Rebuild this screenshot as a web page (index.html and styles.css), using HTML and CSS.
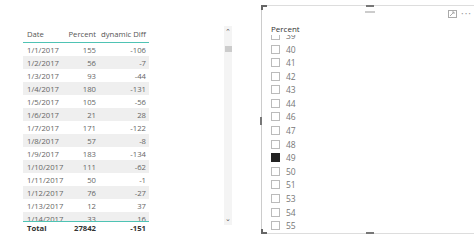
FILE: index.html
```html
<!DOCTYPE html>
<html lang="en">

<head>
 <meta charset="UTF-8">
 <meta name="viewport" content="width=device-width">
 <title>Report</title>
 <link rel="stylesheet" href="styles.css">
</head>

<body>

 <!-- Table visual -->
 <section class="tabla">
  <div class="grid">
   <div class="fila cabecera">
    <span>Date</span><span class="num">Percent</span><span class="num">dynamic Diff</span>
   </div>
   <div class="cuerpo">
    <div class="fila"><span>1/1/2017</span><span class="num">155</span><span class="num">-106</span></div>
    <div class="fila"><span>1/2/2017</span><span class="num">56</span><span class="num">-7</span></div>
    <div class="fila"><span>1/3/2017</span><span class="num">93</span><span class="num">-44</span></div>
    <div class="fila"><span>1/4/2017</span><span class="num">180</span><span class="num">-131</span></div>
    <div class="fila"><span>1/5/2017</span><span class="num">105</span><span class="num">-56</span></div>
    <div class="fila"><span>1/6/2017</span><span class="num">21</span><span class="num">28</span></div>
    <div class="fila"><span>1/7/2017</span><span class="num">171</span><span class="num">-122</span></div>
    <div class="fila"><span>1/8/2017</span><span class="num">57</span><span class="num">-8</span></div>
    <div class="fila"><span>1/9/2017</span><span class="num">183</span><span class="num">-134</span></div>
    <div class="fila"><span>1/10/2017</span><span class="num">111</span><span class="num">-62</span></div>
    <div class="fila"><span>1/11/2017</span><span class="num">50</span><span class="num">-1</span></div>
    <div class="fila"><span>1/12/2017</span><span class="num">76</span><span class="num">-27</span></div>
    <div class="fila"><span>1/13/2017</span><span class="num">12</span><span class="num">37</span></div>
    <div class="fila"><span>1/14/2017</span><span class="num">33</span><span class="num">16</span></div>
   </div>
   <div class="fila total">
    <span>Total</span><span class="num">27842</span><span class="num">-151</span>
   </div>
  </div>

  <div class="scroll">
   <span class="flecha">&#8963;</span>
   <span class="pulgar"></span>
   <span class="hueco"></span>
   <span class="flecha">&#8964;</span>
  </div>
 </section>

 <!-- Slicer visual -->
 <section class="slicer">
  <span class="esquina arriba"></span>
  <span class="esquina abajo"></span>
  <span class="asa asa-top"></span>
  <span class="asa asa-left"></span>
  <span class="asa asa-bottom"></span>

  <div class="barra">
   <span class="grip"></span>
   <svg class="foco" width="9" height="8" viewBox="0 0 9 8">
    <rect x="0.5" y="0.5" width="8" height="7" fill="none" stroke="#aaa"/>
    <path d="M2 6 L6 2 M4 2 H6 V4" fill="none" stroke="#aaa"/>
   </svg>
   <span class="mas">&middot;&middot;&middot;</span>
  </div>

  <h2>Percent</h2>

  <div class="lista">
   <ul>
    <li><i></i>39</li>
    <li><i></i>40</li>
    <li><i></i>41</li>
    <li><i></i>42</li>
    <li><i></i>43</li>
    <li><i></i>44</li>
    <li><i></i>46</li>
    <li><i></i>47</li>
    <li><i></i>48</li>
    <li class="marcado"><i></i>49</li>
    <li><i></i>50</li>
    <li><i></i>51</li>
    <li><i></i>53</li>
    <li><i></i>54</li>
    <li><i></i>55</li>
   </ul>
  </div>
 </section>

</body>
</html>
```

FILE: styles.css
```css
body {
  font-family: 'Open Sans', 'Noto Sans', sans-serif;
  background-color: white;
  margin: 0;
  height: 249px;
  display: flex;
  overflow: hidden;
}
.tabla {
  margin: 26px 0 0 23px;
  width: 209px;
  height: 199px;
  display: flex;
  justify-content: space-between;
}
.grid {
  width: 126px;
  font-size: 7.7px;
  color: #666;
}
.fila {
  display: grid;
  grid-template-columns: 40px 36px 50px;
  height: 13px;
  align-items: center;
}
.fila span:first-child {
  padding-left: 4px;
}
.num {
  text-align: right;
  padding-right: 3px;
}
.cabecera {
  height: 16px;
  color: #555;
  border-bottom: 1px solid #4fc3b4;
}
.cuerpo {
  height: 178px;
  overflow: hidden;
  border-bottom: 1px solid #4fc3b4;
}
.cuerpo .fila:nth-child(even) {
  background-color: #efefef;
}
.total {
  height: 11px;
  font-weight: bold;
  color: #333;
}
.scroll {
  width: 8px;
  background-color: #f4f4f4;
  display: flex;
  flex-direction: column;
  align-items: center;
}
.flecha {
  font-size: 7px;
  line-height: 12px;
  height: 12px;
  color: #555;
}
.pulgar {
  margin-top: 8px;
  width: 7px;
  height: 6px;
  background-color: #ccc;
}
.hueco {
  flex: 1;
}
.slicer {
  position: relative;
  flex: 1;
  margin: 5px 0 15px 29px;
  border-top: 1px solid #ddd;
  border-left: 1px solid #ccc;
  border-bottom: 1px solid #ddd;
  display: flex;
  flex-direction: column;
}
.esquina {
  position: absolute;
  left: -1px;
  width: 4px;
  height: 3px;
  border-left: 2px solid #666;
}
.esquina.arriba {
  top: -1px;
  border-top: 2px solid #666;
}
.esquina.abajo {
  bottom: -1px;
  border-bottom: 2px solid #666;
}
.asa {
  position: absolute;
  background-color: #777;
}
.asa-top {
  top: -1px;
  left: 104px;
  width: 8px;
  height: 2px;
}
.asa-bottom {
  bottom: -1px;
  left: 104px;
  width: 8px;
  height: 2px;
}
.asa-left {
  top: 111px;
  left: -2px;
  width: 2px;
  height: 8px;
}
.barra {
  position: relative;
  height: 16px;
}
.grip {
  position: absolute;
  top: 5px;
  left: 103px;
  width: 10px;
  height: 2px;
  background-color: #ccc;
}
.foco {
  position: absolute;
  top: 4px;
  left: 186px;
}
.mas {
  position: absolute;
  top: 0;
  left: 199px;
  font-size: 10px;
  line-height: 14px;
  color: #999;
  letter-spacing: 1px;
}
h2 {
  margin: 0 0 0 9px;
  font-size: 8px;
  font-weight: normal;
  color: #333;
  line-height: 13px;
}
.lista {
  flex: 1;
  overflow: hidden;
}
ul {
  list-style: none;
  margin: -6.4px 0 0 9px;
  padding: 0;
}
li {
  height: 13.6px;
  display: flex;
  align-items: center;
  font-size: 8.5px;
  color: #777;
}
li i {
  width: 7px;
  height: 7px;
  border: 1px solid #bbb;
  margin-right: 6px;
}
li.marcado i {
  background-color: #222;
  border-color: #222;
}
```
